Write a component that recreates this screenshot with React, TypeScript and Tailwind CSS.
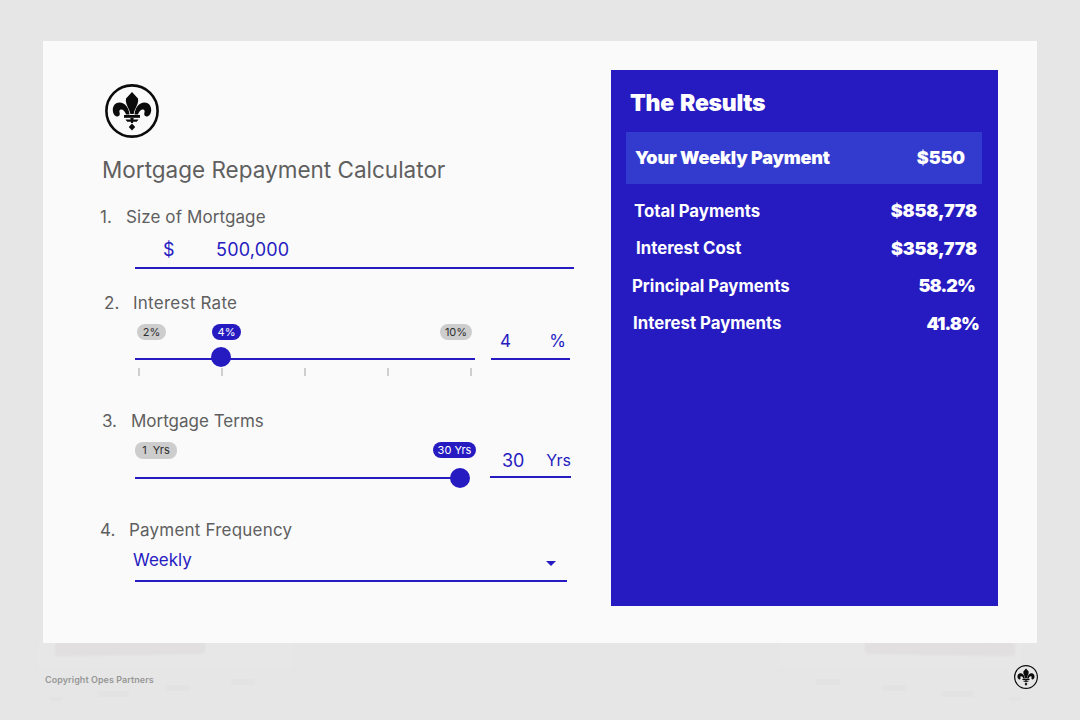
const Logo = ({ className }: { className: string }) => (
  <svg viewBox="0 0 54 54" className={className}>
    <circle cx="27" cy="27" r="25.6" fill="none" stroke="#0b0b0b" strokeWidth="2.6" />
    <path d="M27 8 L33 14.5 C34 20 29.8 24 28.6 30 L25.4 30 C24.2 24 20 20 21 14.5 Z" fill="#0b0b0b" />
    <g fill="#0b0b0b">
      <path d="M24.5 30.5 C24 24 20 18.5 14.5 18.5 C10.5 18.5 7.8 21.5 7.8 26 C7.8 29.8 10 32.5 12.5 32.5 C14.4 32.5 15.2 30.5 14.6 28.8 C14 27 14.5 25.5 16 25.5 C18.5 25.5 20 27.5 21 30.5 Z" />
      <path d="M29.5 30.5 C30 24 34 18.5 39.5 18.5 C43.5 18.5 46.2 21.5 46.2 26 C46.2 29.8 44 32.5 41.5 32.5 C39.6 32.5 38.8 30.5 39.4 28.8 C40 27 39.5 25.5 38 25.5 C35.5 25.5 34 27.5 33 30.5 Z" />
      <rect x="19" y="31" width="16" height="2.8" />
      <path d="M20.5 35.6 H33.5 L31.8 37.8 H22.2 Z" />
      <path d="M25.4 34 H28.6 L28 39 H26 Z" />
      <path d="M27 39.5 L30.2 43 L27 46.5 L23.8 43 Z" />
    </g>
  </svg>
);

const Badge = ({ className, active, children }: { className: string; active?: boolean; children: React.ReactNode }) => (
  <span
    className={`absolute top-0 flex h-4 items-center justify-center rounded-lg text-[11px] leading-none ${
      active ? "bg-[#261bc1] text-white" : "bg-[#cdcdcd] text-[#2e2e2e]"
    } ${className}`}
  >
    {children}
  </span>
);

const results = [
  { label: "Total Payments", value: "$858,778", row: "pl-[23px] pr-[21px]", tone: "tracking-[-0.2px]" },
  { label: "Interest Cost", value: "$358,778", row: "pl-[25px] pr-[21px]", tone: "tracking-[-0.2px]" },
  { label: "Principal Payments", value: "58.2%", row: "pl-[21px] pr-[23px]", tone: "tracking-[-0.9px]" },
  { label: "Interest Payments", value: "41.8%", row: "pl-[22px] pr-[19px]", tone: "tracking-[-0.9px]" },
];

// faint ghost marks in the footer background
const ghosts = [
  "left-[231px] top-[36px] h-[6px] w-[24px]",
  "left-[165px] top-[42px] h-[6px] w-[24px]",
  "left-[98px] top-[48px] h-[6px] w-[31px]",
  "left-[50px] top-[54px] h-[4px] w-[12px]",
  "left-[816px] top-[36px] h-[6px] w-[24px]",
  "left-[882px] top-[42px] h-[6px] w-[24px]",
  "left-[942px] top-[48px] h-[6px] w-[31px]",
  "left-[1009px] top-[54px] h-[4px] w-[12px]",
];

export default function App() {
  return (
    <div className="flex h-[720px] w-[1080px] flex-col overflow-hidden bg-[#e6e6e6] pt-[41px] font-['Inter',sans-serif]">
      <main className="relative z-10 mx-[43px] flex h-[602px] bg-[#fafafa] pb-[37px] pr-[39px] pt-[29px]">
        <section className="flex-1 pl-[57px] pt-[14px] text-[#5f5f5f]">
          <Logo className="ml-[5px] h-[54px] w-[54px]" />
          <h1 className="ml-[2px] mt-[18px] text-[22.5px] leading-[28px]">Mortgage Repayment Calculator</h1>

          <h2 className="mt-[22px] flex text-[17px] leading-[22px] tracking-[0.1px]">
            <span className="w-[26px]">1.</span>Size of Mortgage
          </h2>
          <div className="ml-[35px] mt-[9px] flex h-[32px] w-[439px] border-b-2 border-[#261bc1] pb-[5px] text-[18px] leading-[25px] tracking-[0.2px] text-[#261bc1]">
            <span className="ml-[28px] w-[53px]">$</span>
            <span>500,000</span>
          </div>

          <h2 className="ml-[4px] mt-[23px] flex text-[17px] leading-[22px] tracking-[0.25px]">
            <span className="w-[29px]">2.</span>Interest Rate
          </h2>
          <div className="ml-[35px] mt-[10px] flex">
            <div className="relative h-[52px] w-[340px] pt-[34px]">
              <Badge className="left-[2px] w-[29px]">2%</Badge>
              <Badge active className="left-[77px] w-[29px]">4%</Badge>
              <Badge className="left-[305px] w-[32px]">10%</Badge>
              <div className="h-0.5 bg-[#261bc1]" />
              <span className="absolute left-[76px] top-[23px] h-[20px] w-[20px] rounded-full bg-[#261bc1]" />
              <div className="mt-[8px] flex justify-between pl-[3px] pr-[3px]">
                <span className="h-2 w-0.5 bg-[#cfcfcf]" />
                <span className="h-2 w-0.5 bg-[#cfcfcf]" />
                <span className="h-2 w-0.5 bg-[#cfcfcf]" />
                <span className="h-2 w-0.5 bg-[#cfcfcf]" />
                <span className="h-2 w-0.5 bg-[#cfcfcf]" />
              </div>
            </div>
            <div className="ml-[16px] flex h-[36px] w-[79px] justify-between border-b-2 border-[#261bc1] pl-[9px] pr-[4px] pt-[5px] text-[17px] leading-[25px] text-[#261bc1]">
              <span>4</span>
              <span>%</span>
            </div>
          </div>

          <h2 className="ml-[2px] mt-[34px] flex text-[17px] leading-[22px]">
            <span className="w-[29px]">3.</span>Mortgage Terms
          </h2>
          <div className="ml-[35px] mt-[10px] flex">
            <div className="relative h-[37px] w-[325px] pt-[35px]">
              <Badge className="left-0 h-[17px] w-[42px]">1&nbsp;&nbsp;Yrs</Badge>
              <Badge active className="left-[298px] w-[43px]">30 Yrs</Badge>
              <div className="h-0.5 bg-[#261bc1]" />
              <span className="absolute left-[315px] top-[26px] h-[20px] w-[20px] rounded-full bg-[#261bc1]" />
            </div>
            <div className="ml-[30px] flex h-[36px] w-[81px] items-start justify-between border-b-2 border-[#261bc1] pl-[12px] pt-[6px] text-[17px] leading-[25px] text-[#261bc1]">
              <span className="text-[18px]">30</span>
              <span className="text-[16px]">Yrs</span>
            </div>
          </div>

          <h2 className="mt-[40px] flex text-[17px] leading-[22px] tracking-[0.2px]">
            <span className="w-[29px]">4.</span>Payment Frequency
          </h2>
          <div className="ml-[35px] mt-[5px] flex h-[36px] w-[432px] items-center justify-between border-b-2 border-[#261bc1] pb-[4px] pr-[11px] text-[17px] text-[#261bc1]">
            <span className="-ml-[2px]">Weekly</span>
            <span className="mt-[4px] h-0 w-0 border-x-[5.5px] border-t-[5px] border-x-transparent border-t-[#261bc1]" />
          </div>
        </section>

        <aside className="w-[387px] bg-[#261bc1] text-white">
          <h2 className="ml-[19px] mt-[18px] text-[23px] font-black leading-[30px] tracking-[-0.3px] [word-spacing:2px]">The Results</h2>
          <div className="ml-[15px] mr-[16px] mt-[14px] flex h-[52px] items-center justify-between bg-[#333bce] pb-[2px] pl-[9px] pr-[17px] text-[18px] font-black tracking-[-0.15px]">
            <span>Your Weekly Payment</span>
            <span>$550</span>
          </div>
          <div className="mt-[8px]">
            {results.map((r) => (
              <div key={r.label} className={`flex h-[37.5px] items-center justify-between ${r.row}`}>
                <span className="mt-[1px] text-[16.8px] font-bold">{r.label}</span>
                <span className={`text-[18px] font-black ${r.tone}`}>{r.value}</span>
              </div>
            ))}
          </div>
        </aside>
      </main>

      <footer className="relative flex flex-1 items-center justify-between pb-[4px] pl-[45px] pr-[42px] text-[9px] font-semibold tracking-[0.05px] text-[#979797]">
        <div className="absolute left-[38px] top-0 h-[26px] w-[254px] bg-[#e7e7e7] blur-[2px]" />
        <div className="absolute right-[58px] top-0 h-[26px] w-[241px] bg-[#e7e7e7] blur-[2px]" />
        <div className="absolute left-[55px] -top-[2px] h-[14px] w-[150px] rotate-[-1deg] rounded-sm bg-[#e1dfdf] blur-[1px]" />
        <div className="absolute left-[865px] -top-[2px] h-[14px] w-[150px] rotate-[1deg] rounded-sm bg-[#e1dfdf] blur-[1px]" />
        {ghosts.map((g) => (
          <div key={g} className={`absolute bg-[#e3e3e3] ${g}`} />
        ))}
        <span className="relative">Copyright Opes Partners</span>
        <Logo className="relative -mt-[5px] h-6 w-6" />
      </footer>
    </div>
  );
}
